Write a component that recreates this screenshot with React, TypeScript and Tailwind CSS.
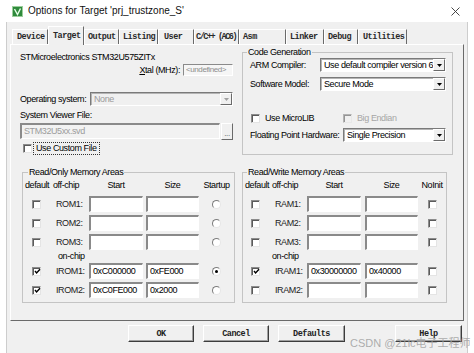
import React from "react";

const SANS = "font-['Liberation_Sans',Arial,sans-serif]";
const MONO = "font-['Liberation_Mono','Courier_New',monospace]";

const TABS = [
  { label: "Device", w: "w-[36px]", pad: "pl-[4px]", txt: "" },
  { label: "Target", w: "w-[36px]", pad: "pl-[4px]", txt: "", active: true },
  { label: "Output", w: "w-[35px]", pad: "pl-[3px]", txt: "" },
  { label: "Listing", w: "w-[39px]", pad: "pl-[3px]", txt: "" },
  { label: "User", w: "w-[36px]", pad: "pl-[5px]", txt: "" },
  { label: "C/C++ (AC6)", w: "w-[45px]", pad: "pl-[1px]", txt: "tracking-[-1.45px]" },
  { label: "Asm", w: "w-[47px]", pad: "pl-[3px]", txt: "" },
  { label: "Linker", w: "w-[38px]", pad: "pl-[3px]", txt: "" },
  { label: "Debug", w: "w-[34px]", pad: "pl-[3px]", txt: "" },
  { label: "Utilities", w: "w-[49px]", pad: "pl-[4px]", txt: "" },
];

function TitleIcon() {
  return (
    <svg width="11" height="11" viewBox="0 0 11 11">
      <rect x="0.5" y="0.5" width="10" height="10" fill="#2f8a3c" stroke="#9ccf9c" />
      <path d="M2.5 3 L5.5 8.5 L8.5 2.5" fill="none" stroke="#e8ffe8" strokeWidth="1.4" />
    </svg>
  );
}

function Check({ checked = false, disabled = false }: { checked?: boolean; disabled?: boolean }) {
  return (
    <span
      className={`relative inline-block w-[9px] h-[9px] shrink-0 border-t border-l border-r border-b border-t-[#8c8c8c] border-l-[#8c8c8c] border-r-[#e4e4e4] border-b-[#e4e4e4] shadow-[inset_1px_1px_0_#5a5a5a] ${
        disabled ? "bg-[#f0f0f0] opacity-60" : "bg-white"
      }`}
    >
      {checked && (
        <svg width="7" height="7" viewBox="0 0 7 7" className="absolute left-[1px] top-[0px]">
          <path d="M1 3 L2.6 5 L6 1.2" fill="none" stroke="#000" strokeWidth="1.4" />
        </svg>
      )}
    </span>
  );
}

function Radio({ checked = false }: { checked?: boolean }) {
  return (
    <span className="relative inline-block w-[9px] h-[9px] rounded-full bg-white border border-t-[#7c7c7c] border-l-[#7c7c7c] border-r-[#e6e6e6] border-b-[#e6e6e6]">
      {checked && <span className="absolute left-[2px] top-[2px] w-[3px] h-[3px] rounded-full bg-black" />}
    </span>
  );
}

function Field({ value = "", disabled = false, className = "" }: { value?: string; disabled?: boolean; className?: string }) {
  return (
    <div
      className={`h-[16px] border-t-2 border-l-2 border-r border-b border-t-[#8a8a8a] border-l-[#8a8a8a] border-r-white border-b-white pl-[2px] text-[9px] leading-[12px] tracking-[-0.4px] whitespace-nowrap overflow-hidden ${
        disabled ? "bg-[#f2f2f2] text-[#9c9c9c]" : "bg-white text-black"
      } ${className}`}
    >
      {value}
    </div>
  );
}

function Select({ value, disabled = false, className = "" }: { value: string; disabled?: boolean; className?: string }) {
  return (
    <div
      className={`flex h-[14px] border-t border-l border-r border-b border-t-[#7a7a7a] border-l-[#7a7a7a] border-r-white border-b-white shadow-[inset_1px_1px_0_#b4b4b4] ${
        disabled ? "bg-[#f0f0f0] text-[#9c9c9c]" : "bg-white text-black"
      } ${className}`}
    >
      <span className="flex-1 pl-[3px] text-[9px] leading-[12px] tracking-[-0.4px] whitespace-nowrap overflow-hidden">{value}</span>
      <span className="w-[12px] h-[12px] flex items-center justify-center bg-[#f0f0f0] border-t border-l border-r border-b border-t-white border-l-white border-r-[#6a6a6a] border-b-[#6a6a6a]">
        <svg width="5" height="3" viewBox="0 0 5 3">
          <path d="M0 0 H5 L2.5 3 Z" fill={disabled ? "#a0a0a0" : "#000"} />
        </svg>
      </span>
    </div>
  );
}

function Button({ label, w }: { label: string; w: string }) {
  return (
    <div
      className={`${w} h-[17px] flex items-center justify-center bg-[#f0f0f0] border-t border-l border-r border-b border-t-white border-l-white border-r-[#3c3c3c] border-b-[#3c3c3c] shadow-[inset_-1px_-1px_0_#a0a0a0] ${MONO} text-[8.5px] font-bold tracking-[-0.5px] text-[#222]`}
    >
      {label}
    </div>
  );
}

type Row = { label: string; start?: string; size?: string; def?: boolean; on?: boolean };

const ROM_OFF: Row[] = [{ label: "ROM1:" }, { label: "ROM2:" }, { label: "ROM3:" }];
const ROM_ON: Row[] = [
  { label: "IROM1:", start: "0xC000000", size: "0xFE000", def: true, on: true },
  { label: "IROM2:", start: "0xC0FE000", size: "0x2000", def: true },
];
const RAM_OFF: Row[] = [{ label: "RAM1:" }, { label: "RAM2:" }, { label: "RAM3:" }];
const RAM_ON: Row[] = [
  { label: "IRAM1:", start: "0x30000000", size: "0x40000", def: true },
  { label: "IRAM2:" },
];

function RomRow({ row, first }: { row: Row; first?: boolean }) {
  return (
    <div className={`flex items-center h-[16px] ${first ? "mt-[5px]" : "mt-[3px]"}`}>
      <div className="w-[30px] pl-[9px] flex items-center">
        <Check checked={row.def} />
      </div>
      <div className="w-[36px] pl-[3px] text-[#222]">{row.label}</div>
      <Field value={row.start} className="w-[54px]" />
      <Field value={row.size} className="w-[53px] ml-[3px]" />
      <div className="w-[35px] flex justify-center">
        <Radio checked={row.on} />
      </div>
    </div>
  );
}

function RamRow({ row, first }: { row: Row; first?: boolean }) {
  return (
    <div className={`flex items-center h-[16px] ${first ? "mt-[5px]" : "mt-[3px]"}`}>
      <div className="w-[29px] pl-[8px] flex items-center">
        <Check checked={row.def} />
      </div>
      <div className="w-[35px] pl-[3px] text-[#222]">{row.label}</div>
      <Field value={row.start} className="w-[54px]" />
      <Field value={row.size} className="w-[53px] ml-[4px]" />
      <div className="w-[28px] flex justify-center">
        <Check />
      </div>
    </div>
  );
}

export default function App() {
  return (
    <div className={`relative w-[474px] h-[353px] overflow-hidden bg-white text-black ${SANS} text-[9px] leading-[12px] tracking-[-0.4px]`}>
      {/* Title bar */}
      <div className="h-[22px] flex items-center pl-[12px] pr-[14px]">
        <TitleIcon />
        <span className="ml-[5px] text-[10px] tracking-[0px] text-[#111]">Options for Target 'prj_trustzone_S'</span>
        <svg width="9" height="9" viewBox="0 0 9 9" className="ml-auto">
          <path d="M0.5 0.5 L8.5 8.5 M8.5 0.5 L0.5 8.5" stroke="#333" strokeWidth="0.9" />
        </svg>
      </div>

      {/* Window body */}
      <div className="mx-[6px] h-[331px] border-l border-r border-[#cdcdcd] bg-[#f0f0f0]">
        {/* Tabs */}
        <div className={`flex items-end h-[22px] pl-[5px] pt-[4px] ${MONO} text-[8.5px] font-bold tracking-[-0.5px] text-[#2a2a2a]`}>
          {TABS.map((t) =>
            t.active ? (
              <div
                key={t.label}
                className={`relative z-10 -mb-px ${t.w} ${t.pad} h-[19px] pt-[3px] bg-[#f0f0f0] border-t border-l border-r border-t-white border-l-white border-r-[#6a6a6a] whitespace-nowrap`}
              >
                {t.label}
              </div>
            ) : (
              <div
                key={t.label}
                className={`${t.w} ${t.pad} h-[15px] pt-[1px] border-t border-l border-r border-t-white border-l-white border-r-[#6a6a6a] whitespace-nowrap ${t.txt}`}
              >
                {t.label}
              </div>
            )
          )}
        </div>

        {/* Tab panel */}
        <div className="ml-[3px] w-[454px] h-[277px] border border-t-white border-l-white border-r-[#6a6a6a] border-b-[#6a6a6a]">
          {/* Top section */}
          <div className="flex items-start pl-[9px] pt-[1px]">
            {/* Device info */}
            <div className="w-[213px]">
              <div className="mt-[5px] h-[12px]">STMicroelectronics STM32U575ZITx</div>
              <div className="flex items-center justify-end h-[13px]">
                <span className="mr-[3px]">
                  <span className="underline">X</span>tal (MHz):
                </span>
                <div className="w-[50px] h-[12px] border-t border-l border-r border-b border-t-[#8a8a8a] border-l-[#8a8a8a] border-r-white border-b-white bg-[#f6f6f6] pl-[2px] text-[8px] leading-[10px] text-[#8e8e8e] whitespace-nowrap overflow-hidden">
                  &lt;undefined&gt;
                </div>
              </div>
              <div className="flex items-center mt-[16px] h-[14px]">
                <span className="w-[70px]">Operating system:</span>
                <Select value="None" disabled className="flex-1" />
              </div>
              <div className="mt-[3px] h-[12px]">System Viewer File:</div>
              <div className="flex items-start mt-[2px]">
                <Field value="STM32U5xx.svd" disabled className="flex-1" />
                <div className="ml-[1px] w-[12px] h-[17px] flex items-end justify-center bg-[#f0f0f0] border-t border-l border-r border-b border-t-white border-l-white border-r-[#6a6a6a] border-b-[#6a6a6a] text-[8px] leading-[10px] text-[#555]">
                  ...
                </div>
              </div>
              <div className="flex items-center mt-[2px] h-[13px] pl-[3px]">
                <Check />
                <span className="ml-[1px] px-[2px] h-[13px] border border-dotted border-[#333] leading-[11px]">Use Custom File</span>
              </div>
            </div>

            {/* Code Generation */}
            <fieldset className="ml-[9px] w-[210px] h-[109px] border border-[#c4c4c4]">
              <legend className="ml-[4px] px-[1px] leading-[12px]">Code Generation</legend>
              <div className="pl-[7px] pr-[6px]">
                <div className="flex items-center h-[14px]">
                  <span className="w-[70px]">ARM Compiler:</span>
                  <Select value="Use default compiler version 6" className="flex-1" />
                </div>
                <div className="flex items-center mt-[5px] h-[14px]">
                  <span className="w-[70px]">Software Model:</span>
                  <Select value="Secure Mode" className="flex-1" />
                </div>
                <div className="flex items-center mt-[21px] h-[12px] pl-[1px]">
                  <div className="w-[92px] flex items-center">
                    <Check />
                    <span className="ml-[5px]">Use MicroLIB</span>
                  </div>
                  <div className="flex items-center">
                    <Check disabled />
                    <span className="ml-[5px] text-[#a6a6a6]">Big Endian</span>
                  </div>
                </div>
                <div className="flex items-center mt-[4px] h-[14px]">
                  <span className="w-[93px]">Floating Point Hardware:</span>
                  <Select value="Single Precision" className="flex-1" />
                </div>
              </div>
            </fieldset>
          </div>

          {/* Memory areas */}
          <div className="flex items-start mt-[11px] pl-[11px]">
            <fieldset className="w-[213px] h-[137px] border border-[#c4c4c4]">
              <legend className="ml-[5px] px-[1px] leading-[12px]">Read/Only Memory Areas</legend>
              <div className="flex items-center mt-[1px] h-[12px]">
                <span className="w-[30px] pl-[2px]">default</span>
                <span className="w-[36px]">off-chip</span>
                <span className="w-[54px] text-center">Start</span>
                <span className="w-[53px] ml-[3px] text-center">Size</span>
                <span className="w-[35px] text-center">Startup</span>
              </div>
              {ROM_OFF.map((r, i) => (
                <RomRow key={r.label} row={r} first={i === 0} />
              ))}
              <div className="mt-[1px] h-[11px] leading-[11px] pl-[35px]">on-chip</div>
              <div className="-mt-[2px]">
                {ROM_ON.map((r) => (
                  <RomRow key={r.label} row={r} />
                ))}
              </div>
            </fieldset>

            <fieldset className="ml-[7px] w-[205px] h-[137px] border border-[#c4c4c4]">
              <legend className="ml-[4px] px-[1px] leading-[12px]">Read/Write Memory Areas</legend>
              <div className="flex items-center mt-[1px] h-[12px]">
                <span className="w-[29px] pl-[2px]">default</span>
                <span className="w-[35px]">off-chip</span>
                <span className="w-[54px] text-center">Start</span>
                <span className="w-[53px] ml-[4px] text-center">Size</span>
                <span className="w-[28px] text-center">NoInit</span>
              </div>
              {RAM_OFF.map((r, i) => (
                <RamRow key={r.label} row={r} first={i === 0} />
              ))}
              <div className="mt-[1px] h-[11px] leading-[11px] pl-[29px]">on-chip</div>
              <div className="-mt-[2px]">
                {RAM_ON.map((r) => (
                  <RamRow key={r.label} row={r} />
                ))}
              </div>
            </fieldset>
          </div>
        </div>

        {/* Dialog buttons */}
        <div className="flex mt-[4px] pl-[121px]">
          <Button label="OK" w="w-[66px]" />
          <div className="ml-[9px]">
            <Button label="Cancel" w="w-[66px]" />
          </div>
          <div className="ml-[9px]">
            <Button label="Defaults" w="w-[67px]" />
          </div>
          <div className="ml-[50px]">
            <Button label="Help" w="w-[67px]" />
          </div>
        </div>
      </div>

      {/* Watermark */}
      <div className="absolute left-[350px] top-[336px] font-['Liberation_Sans','Noto_Sans_CJK_SC',sans-serif] text-[11px] leading-[14px] tracking-[0px] text-[#a4a4a4]/90 whitespace-nowrap pointer-events-none">
        CSDN @21ic电子工程师
      </div>
    </div>
  );
}
